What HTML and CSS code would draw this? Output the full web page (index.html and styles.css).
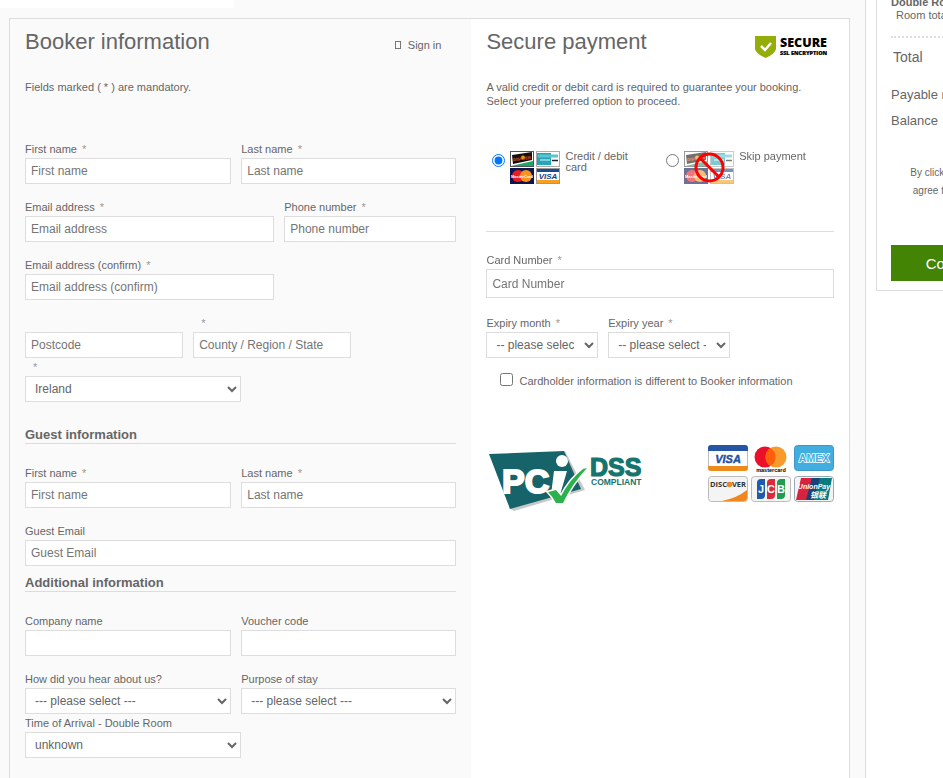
FILE: index.html
```html
<!DOCTYPE html>
<html lang="en">
<head>
    <meta charset="UTF-8">
    <meta name="viewport" content="width=device-width, initial-scale=1.0">
    <title>Booking</title>
    <link rel="stylesheet" href="styles.css">
</head>
<body>
    <!-- Shared card artwork for the payment options -->
    <svg class="sprite" aria-hidden="true">
        <symbol id="card-set" viewBox="0 0 50 33">
            <rect x="0.5" y="0.5" width="23" height="15" fill="#fff" stroke="#555"/>
            <path d="M1 15l22-5v5z" fill="#1da66b"/>
            <path d="M2 4l20-3v8L3 13z" fill="#15100d"/>
            <circle cx="13" cy="6.500" r="2" fill="#f49b1c"/>
            <text x="3" y="9" font-size="4" font-weight="bold" fill="#e6572d" transform="rotate(-8 12 7)">DISCVER</text>
            <rect x="26.500" y="0.500" width="23" height="15" fill="#fff" stroke="#aaa"/>
            <rect x="27" y="2" width="14" height="12" fill="#27a5b8"/>
            <path d="M28 5h20" stroke="#5cc3cf" stroke-width="3"/>
            <path d="M30 9h10" stroke="#9de0e6" stroke-width="1.500"/>
            <path d="M42 9.500h6" stroke="#222" stroke-width="1.500"/>
            <rect y="17" width="24" height="16" fill="#0b1550"/>
            <circle cx="8" cy="25" r="6" fill="#e81c23"/>
            <circle cx="16" cy="25" r="6" fill="#f7941d"/>
            <text x="12" y="27" font-size="4" font-weight="bold" text-anchor="middle" fill="#fff">MasterCard</text>
            <rect x="26.500" y="17.500" width="23" height="15" fill="#fff" stroke="#999"/>
            <path d="M27 18h22v3H27z" fill="#1a4a94"/>
            <path d="M27 29h22v3H27z" fill="#f7a021"/>
            <text x="38" y="28" font-size="8" font-weight="bold" font-style="italic" text-anchor="middle" fill="#173f85">VISA</text>
        </symbol>
    </svg>

    <div class="page">
        <main class="main">
            <div class="tab"></div>

            <form class="panel">
                <!-- Booker details -->
                <section class="booker">
                    <header class="section-header">
                        <h2>Booker information</h2>
                        <a href="#" class="sign-in"><span class="sign-in-icon"></span>Sign in</a>
                    </header>
                    <p class="mandatory">Fields marked ( * ) are mandatory.</p>

                    <div class="row row-names">
                        <div class="field">
                            <label for="first-name">First name <span class="req">*</span></label>
                            <input type="text" id="first-name" placeholder="First name">
                        </div>
                        <div class="field">
                            <label for="last-name">Last name <span class="req">*</span></label>
                            <input type="text" id="last-name" placeholder="Last name">
                        </div>
                    </div>
                    <div class="row row-contact">
                        <div class="field">
                            <label for="email">Email address <span class="req">*</span></label>
                            <input type="email" id="email" placeholder="Email address">
                        </div>
                        <div class="field">
                            <label for="phone">Phone number <span class="req">*</span></label>
                            <input type="tel" id="phone" placeholder="Phone number">
                        </div>
                    </div>
                    <div class="row row-contact">
                        <div class="field">
                            <label for="email-confirm">Email address (confirm) <span class="req">*</span></label>
                            <input type="email" id="email-confirm" placeholder="Email address (confirm)">
                        </div>
                    </div>
                    <div class="row row-address">
                        <div class="field">
                            <label for="postcode"></label>
                            <input type="text" id="postcode" placeholder="Postcode">
                        </div>
                        <div class="field">
                            <label for="county"><span class="req req-only">*</span></label>
                            <input type="text" id="county" placeholder="County / Region / State">
                        </div>
                    </div>
                    <div class="row row-half">
                        <div class="field">
                            <label for="country"><span class="req req-only">*</span></label>
                            <select id="country"><option>Ireland</option></select>
                        </div>
                    </div>

                    <h3 class="guest-title">Guest information</h3>
                    <div class="row row-names">
                        <div class="field">
                            <label for="guest-first">First name <span class="req">*</span></label>
                            <input type="text" id="guest-first" placeholder="First name">
                        </div>
                        <div class="field">
                            <label for="guest-last">Last name <span class="req">*</span></label>
                            <input type="text" id="guest-last" placeholder="Last name">
                        </div>
                    </div>
                    <div class="row row-tight">
                        <div class="field">
                            <label for="guest-email">Guest Email</label>
                            <input type="email" id="guest-email" placeholder="Guest Email">
                        </div>
                    </div>

                    <h3>Additional information</h3>
                    <div class="row row-names">
                        <div class="field">
                            <label for="company">Company name</label>
                            <input type="text" id="company">
                        </div>
                        <div class="field">
                            <label for="voucher">Voucher code</label>
                            <input type="text" id="voucher">
                        </div>
                    </div>
                    <div class="row row-names row-tight">
                        <div class="field">
                            <label for="hear">How did you hear about us?</label>
                            <select id="hear"><option>--- please select ---</option></select>
                        </div>
                        <div class="field">
                            <label for="purpose">Purpose of stay</label>
                            <select id="purpose"><option>--- please select ---</option></select>
                        </div>
                    </div>
                    <div class="row row-half">
                        <div class="field">
                            <label for="arrival">Time of Arrival - Double Room</label>
                            <select id="arrival"><option>unknown</option></select>
                        </div>
                    </div>
                </section>

                <!-- Payment details -->
                <section class="payment">
                    <header class="section-header">
                        <h2>Secure payment</h2>
                        <svg class="ssl" width="74" height="24" viewBox="0 0 74 24" role="img" aria-label="Secure SSL encryption">
                            <path d="M0 1h21v13q-1 5-10.500 9Q1 19 0 14z" fill="#95ad08"/>
                            <path d="M6 11l4 4 6-7" fill="none" stroke="#fff" stroke-width="2.500"/>
                            <text x="25" y="12" class="open" font-size="12.500" font-weight="800">SECURE</text>
                            <text x="25" y="20" class="open" font-size="5.500" font-weight="800" stroke="#000" stroke-width="0.200">SSL ENCRYPTION</text>
                        </svg>
                    </header>
                    <p class="intro">A valid credit or debit card is required to guarantee your booking. Select your preferred option to proceed.</p>

                    <div class="options">
                        <label class="option">
                            <input type="radio" name="payment" checked>
                            <svg width="50" height="33" viewBox="0 0 50 33"><use href="#card-set"/></svg>
                            <span>Credit / debit card</span>
                        </label>
                        <label class="option">
                            <input type="radio" name="payment">
                            <svg width="50" height="33" viewBox="0 0 50 33">
                                <use href="#card-set" opacity="0.6"/>
                                <g fill="none" stroke="#f00" stroke-width="3">
                                    <circle cx="25.500" cy="16.500" r="13.500"/>
                                    <path d="M16 7l19 19"/>
                                </g>
                            </svg>
                            <span>Skip payment</span>
                        </label>
                    </div>

                    <div class="row">
                        <div class="field field-card">
                            <label for="card-number">Card Number <span class="req">*</span></label>
                            <input type="text" id="card-number" placeholder="Card Number">
                        </div>
                    </div>
                    <div class="row row-expiry">
                        <div class="field">
                            <label for="exp-month">Expiry month <span class="req">*</span></label>
                            <select id="exp-month"><option>-- please select --</option></select>
                        </div>
                        <div class="field">
                            <label for="exp-year">Expiry year <span class="req">*</span></label>
                            <select id="exp-year"><option>-- please select --</option></select>
                        </div>
                    </div>
                    <label class="check">
                        <input type="checkbox">
                        Cardholder information is different to Booker information
                    </label>

                    <div class="badges">
                        <svg width="158" height="70" viewBox="0 0 158 70" role="img" aria-label="PCI DSS compliant">
                            <path d="M79 6l20 39-71 21-5-3z" fill="#c8c8c8"/>
                            <path d="M3 9l75-3 17 38-71 20z" fill="#16646a"/>
                            <text x="16" y="48" font-size="34" font-weight="bold" fill="#fff" stroke="#fff" stroke-width="2">PC</text>
                            <path d="M68 26h13l-7 24h-9z" fill="#fff"/>
                            <circle cx="76" cy="16" r="6" fill="#fff"/>
                            <path d="M62 47l8-2 5 6q9-17 22-27l4-1Q86 39 77 58h-7q-3-6-8-11z" fill="#2bb24c" stroke="#fff" stroke-width="3" paint-order="stroke"/>
                            <text x="104" y="31" font-size="25" font-weight="bold" fill="#16746f" stroke="#16746f" stroke-width="1.200">DSS</text>
                            <text x="105" y="40" font-size="8.500" font-weight="bold" fill="#16746f">COMPLIANT</text>
                        </svg>
                        <svg width="126" height="58" viewBox="0 0 126 58" role="img" aria-label="Accepted cards">
                            <!-- Visa -->
                            <rect x="0.500" y="0.500" width="39" height="25" rx="3" fill="#fff" stroke="#b9bec6"/>
                            <path d="M0 6V3q0-3 3-3h34q3 0 3 3v3z" fill="#2456a4"/>
                            <path d="M0 21v2q0 3 3 3h34q3 0 3-3v-2z" fill="#ee8b1d"/>
                            <text x="20" y="17.500" font-size="11" font-weight="bold" font-style="italic" text-anchor="middle" fill="#20539f" stroke="#20539f" stroke-width="0.400">VISA</text>
                            <!-- Mastercard -->
                            <circle cx="57" cy="12" r="10.500" fill="#eb0f29"/>
                            <circle cx="68" cy="12" r="10.500" fill="#f79c2a"/>
                            <path d="M62.500 3a10.500 10.500 0 0 1 0 18 10.500 10.500 0 0 1 0-18z" fill="#ff5f0d"/>
                            <text x="63" y="27" font-size="5.500" font-weight="bold" text-anchor="middle">mastercard</text>
                            <!-- Amex -->
                            <rect x="86.500" y="0.500" width="39" height="25" rx="3" fill="#42aee0" stroke="#3d98c2"/>
                            <text x="106" y="17" font-size="10.500" font-weight="bold" text-anchor="middle" fill="#42aee0" stroke="#fff" stroke-width="1.500" paint-order="stroke">AMEX</text>
                            <!-- Discover -->
                            <rect x="0.500" y="31.500" width="39" height="25" rx="3" fill="#f4f4f4" stroke="#bbb"/>
                            <path d="M14 56q15-3 25-11v8q0 3-3 3z" fill="#f0861e"/>
                            <text x="2" y="42" class="open" font-size="7.500" font-weight="bold" fill="#333">DISC</text>
                            <circle cx="21.500" cy="39.500" r="2.800" fill="#f0861e"/>
                            <text x="24" y="42" class="open" font-size="7.500" font-weight="bold" fill="#333">VER</text>
                            <!-- JCB -->
                            <rect x="43.500" y="31.500" width="39" height="25" rx="3" fill="#f4f4f4" stroke="#bbb"/>
                            <path d="M49 38q0-4 4-4h4v16q0 4-4 4h-4z" fill="#1c5ca8"/>
                            <path d="M59 38q0-4 4-4h4v16q0 4-4 4h-4z" fill="#d92b3c"/>
                            <path d="M69 38q0-4 4-4h4v16q0 4-4 4h-4z" fill="#229a50"/>
                            <g font-size="11" font-weight="bold" fill="#fff" text-anchor="middle">
                                <text x="53" y="48">J</text>
                                <text x="63" y="48">C</text>
                                <text x="73" y="48">B</text>
                            </g>
                            <!-- UnionPay -->
                            <rect x="86.500" y="31.500" width="39" height="25" rx="3" fill="#f4f4f4" stroke="#9ab"/>
                            <path d="M93 33h12l-6 22H88z" fill="#d8233f"/>
                            <path d="M104 33h9l-6 22h-9z" fill="#17427c"/>
                            <path d="M112 33h12l-4 22h-14z" fill="#087a80"/>
                            <text x="106" y="44" font-size="7" font-weight="bold" font-style="italic" text-anchor="middle" fill="#fff">UnionPay</text>
                            <text x="110" y="53" class="cjk" font-size="8" font-weight="bold" font-style="italic" text-anchor="middle" fill="#fff">银联</text>
                        </svg>
                    </div>
                </section>
            </form>
        </main>

        <!-- Booking summary -->
        <aside class="summary">
            <strong class="room">Double Room</strong>
            <div class="room-total">Room total</div>
            <div class="total">Total</div>
            <div class="amount">Payable now</div>
            <div class="amount">Balance</div>
            <p class="terms">By clicking Complete Booking, you<br>agree to the terms and conditions</p>
            <button type="submit" class="complete">Complete Booking</button>
        </aside>
    </div>
</body>
</html>
```
FILE: styles.css
```css
* {
    margin: 0;
    padding: 0;
    box-sizing: border-box;
}

body {
    font-family: Arial, "Liberation Sans", sans-serif;
    font-size: 11px;
    line-height: 14px;
    color: #666;
    background-color: #fff;
    overflow: hidden;
}

.sprite {
    position: absolute;
    width: 0;
    height: 0;
}

.page {
    display: flex;
    align-items: flex-start;
    min-width: 1108px;
    padding-right: 10px;
}

.main {
    flex: 1;
    display: flex;
    flex-direction: column;
    min-height: 100vh;
    padding-right: 15px;
    padding-left: 9px;
    background-color: #fafafa;
    border-right: 1px solid #ddd;
}

.tab {
    width: 234px;
    height: 8px;
    margin: 0 0 10px -9px;
    background-color: #fff;
}

.panel {
    flex: 1;
    display: grid;
    grid-template-columns: 11fr 9fr;
    border: 1px solid #ddd;
    border-bottom: none;
}

.booker,
.payment {
    min-width: 0;
    padding: 10px 15px 20px;
}

.payment {
    background-color: #fff;
}

.section-header {
    display: flex;
    justify-content: space-between;
    height: 51px;
}

h2 {
    font-size: 22px;
    font-weight: normal;
    line-height: 25px;
}

.sign-in {
    display: flex;
    align-items: center;
    gap: 7px;
    height: 32px;
    margin-right: 15px;
    color: #666;
    text-decoration: none;
}

.sign-in-icon {
    width: 6px;
    height: 8px;
    border: 1px solid #777;
}

.ssl {
    margin: 6px 5px 0 0;
}

.mandatory {
    margin-bottom: 46px;
}

.intro {
    margin-bottom: 43px;
}

/* Form rows */
.row {
    display: grid;
    gap: 10px;
    margin-bottom: 14px;
}

.payment .row {
    margin-bottom: 16px;
}

.row-names {
    grid-template-columns: 206fr 215fr;
}

.row-contact {
    grid-template-columns: 249fr 172fr;
}

.row-address {
    grid-template-columns: 158fr 158fr 95fr;
}

.row-address,
.row-tight {
    margin-bottom: 0;
}

.row-half {
    grid-template-columns: 1fr 1fr;
    gap: 0;
}

.row-expiry {
    grid-template-columns: 112fr 122fr 94fr;
}

.field {
    min-width: 0;
}

.field label {
    display: block;
    height: 18px;
    line-height: 18px;
}

.req {
    margin-left: 2px;
    color: #999;
}

.req-only {
    margin-left: 8px;
}

.field input,
.field select {
    display: block;
    width: 100%;
    height: 26px;
    padding: 0 5px;
    font-family: inherit;
    font-size: 12px;
    color: #666;
    background-color: #fff;
    border: 1px solid #ddd;
    border-radius: 0;
}

.field select {
    padding-right: 7px;
}

.field-card input[type="text"] {
    height: 29px;
}

::placeholder {
    color: #757575;
}

h3 {
    margin: 8px 0 20px;
    font-size: 13px;
    line-height: 17px;
    border-bottom: 1px solid #ddd;
}

.guest-title {
    margin-top: 24px;
}

/* Payment options */
.options {
    display: grid;
    grid-template-columns: 1fr 1fr;
    height: 81px;
    margin-bottom: 19px;
    border-bottom: 1px solid #ddd;
}

.option {
    display: flex;
    align-items: flex-start;
    gap: 5px;
    padding: 0 20px 0 6px;
    line-height: 11px;
}

.option svg {
    flex-shrink: 0;
}

.option input {
    width: 13px;
    height: 13px;
    margin-top: 3px;
}

.check {
    display: flex;
    align-items: center;
    gap: 6px;
    height: 14px;
    margin: 0 0 57px 14px;
}

.check input {
    width: 13px;
    height: 13px;
    margin-bottom: 3px;
}

.badges {
    display: flex;
    justify-content: space-between;
    align-items: flex-start;
}

svg text {
    font-family: Arial, "Liberation Sans", sans-serif;
}

svg .open {
    font-family: "Open Sans", sans-serif;
}

svg .cjk {
    font-family: "Noto Sans CJK SC", sans-serif;
}

/* Booking summary */
.summary {
    width: 222px;
    margin-left: 10px;
    padding: 0 14px 9px;
    border: 1px solid #ddd;
    border-top: none;
}

.room {
    display: block;
    height: 8px;
    line-height: 5px;
}

.room-total {
    padding: 0 0 14px 5px;
    border-bottom: 2px dotted #ddd;
}

.total {
    margin: 10px 0 20px 2px;
    font-size: 14px;
    line-height: 18px;
}

.amount {
    margin-bottom: 8px;
    font-size: 13px;
    line-height: 18px;
}

.terms {
    margin: 34px 0 45px;
    font-size: 10px;
    line-height: 18px;
    text-align: center;
}

.complete {
    width: 100%;
    height: 36px;
    font-family: inherit;
    font-size: 15px;
    color: #fff;
    background-color: #448405;
    border: none;
    cursor: pointer;
}
```
